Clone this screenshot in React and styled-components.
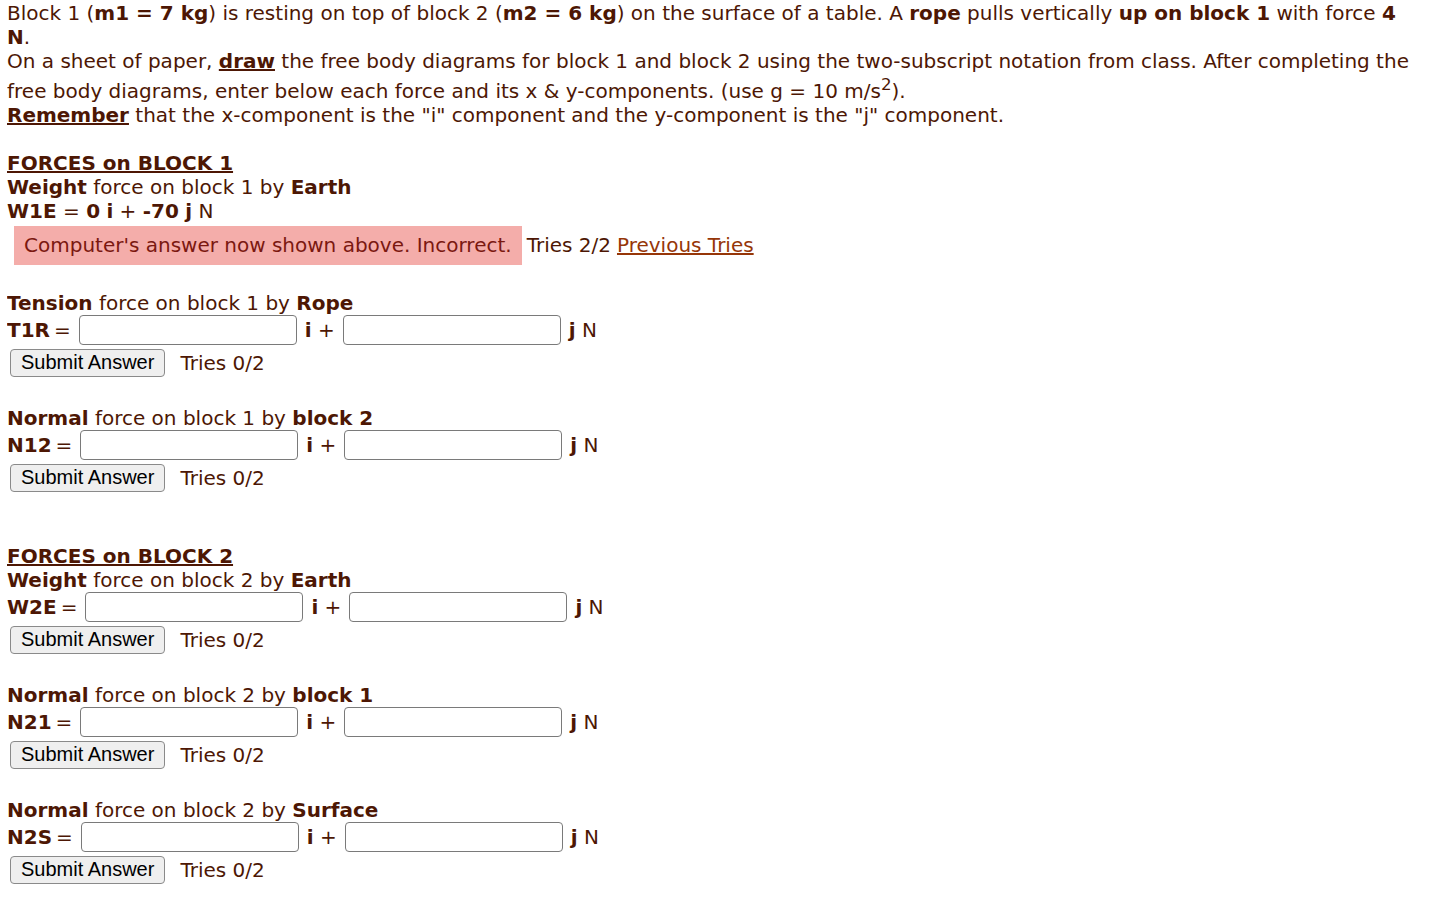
import React from "react";
import styled, { createGlobalStyle } from "styled-components";

const TEXT = "#4d1704";

const GlobalStyle = createGlobalStyle`
  body {
    margin: 1px 7px;
    background: #ffffff;
    font-family: "DejaVu Sans", Verdana, sans-serif;
    font-size: 20px;
    line-height: 24px;
    color: ${TEXT};
  }
`;

const Page = styled.div`
  display: flex;
  flex-direction: column;
`;

const Intro = styled.div`
  margin-bottom: 24px;
`;

const Heading = styled.div`
  font-weight: bold;
  text-decoration: underline;
`;

const Line = styled.div``;

const Feedback = styled.div`
  display: flex;
  align-items: center;
  margin: 3px 0 26px 7px;
`;

const Incorrect = styled.div`
  background: #f4adaa;
  color: #7b1810;
  padding: 7px 10px 8px 10px;
  margin-right: 5px;
`;

const Tries = styled.span`
  color: ${TEXT};
`;

const Link = styled.a`
  color: #963608;
  text-decoration: underline;
  margin-left: 6px;
  cursor: pointer;
`;

const Force = styled.div`
  display: flex;
  flex-direction: column;
  margin-bottom: ${(p) => p.$gap || 29}px;
`;

const InputRow = styled.div`
  display: flex;
  align-items: center;
  height: 30px;
`;

const Name = styled.b`
  margin-right: 4px;
`;

const Field = styled.input`
  box-sizing: border-box;
  width: 218px;
  height: 30px;
  border: 1.5px solid #7a7a7a;
  border-radius: 4px;
  margin: 0 8px;
  background: #fff;
`;

const SubmitRow = styled.div`
  display: flex;
  align-items: center;
  margin-top: 4px;
`;

const SubmitButton = styled.button`
  font-family: "Liberation Sans", Arial, sans-serif;
  font-size: 20px;
  color: #000;
  background: #efefef;
  border: 1.5px solid #8a8a8a;
  border-radius: 4px;
  height: 28px;
  padding: 0 10px;
  margin: 0 15px 0 3px;
  cursor: pointer;
`;

const ForceInput = ({ label, by, name, gap }) => (
  <Force $gap={gap}>
    <Line>
      <b>{label}</b> force on {by[0]} by <b>{by[1]}</b>
    </Line>
    <InputRow>
      <Name>{name}</Name> =
      <Field type="text" />
      <b>i</b>&nbsp;+
      <Field type="text" />
      <b>j</b>&nbsp;N
    </InputRow>
    <SubmitRow>
      <SubmitButton>Submit Answer</SubmitButton>
      <Tries>Tries 0/2</Tries>
    </SubmitRow>
  </Force>
);

export default function App() {
  return (
    <>
      <GlobalStyle />
      <Page>
        <Intro>
          Block 1 (<b>m1 = 7 kg</b>) is resting on top of block 2 (
          <b>m2 = 6 kg</b>) on the surface of a table. A <b>rope</b> pulls
          vertically <b>up on block 1</b> with force <b>4 N</b>.
          <br />
          On a sheet of paper, <b><u>draw</u></b> the free body diagrams for
          block 1 and block 2 using the two-subscript notation from class.
          After completing the free body diagrams, enter below each force and
          its x &amp; y-components. (use g = 10 m/s<sup>2</sup>).
          <br />
          <b><u>Remember</u></b> that the x-component is the "i" component and
          the y-component is the "j" component.
        </Intro>

        <Heading>FORCES on BLOCK 1</Heading>
        <Line>
          <b>Weight</b> force on block 1 by <b>Earth</b>
        </Line>
        <Line>
          <b>W1E</b> = <b>0</b> <b>i</b> + <b>-70</b> <b>j</b> N
        </Line>
        <Feedback>
          <Incorrect>Computer's answer now shown above. Incorrect.</Incorrect>
          <Tries>Tries 2/2</Tries>
          <Link>Previous Tries</Link>
        </Feedback>

        <ForceInput label="Tension" by={["block 1", "Rope"]} name="T1R" />
        <ForceInput
          label="Normal"
          by={["block 1", "block 2"]}
          name="N12"
          gap={52}
        />

        <Heading>FORCES on BLOCK 2</Heading>
        <ForceInput label="Weight" by={["block 2", "Earth"]} name="W2E" />
        <ForceInput label="Normal" by={["block 2", "block 1"]} name="N21" />
        <ForceInput label="Normal" by={["block 2", "Surface"]} name="N2S" />
      </Page>
    </>
  );
}
